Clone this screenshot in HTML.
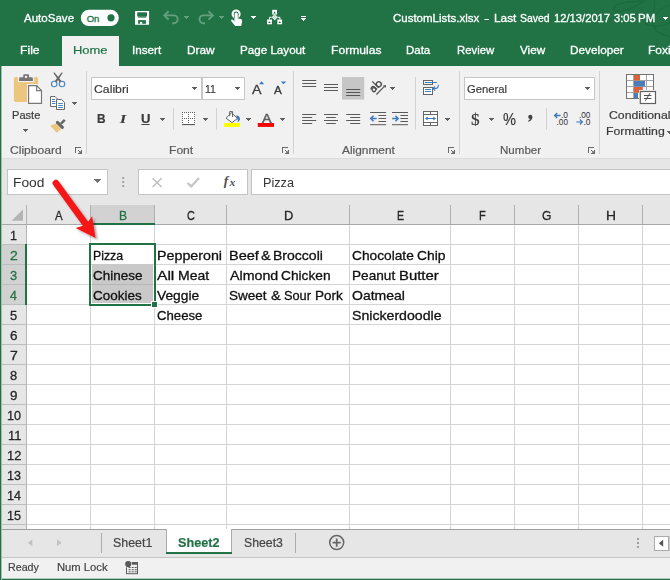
<!DOCTYPE html>
<html><head><meta charset="utf-8"><title>Excel</title>
<style>
html,body{margin:0;padding:0}
body{width:670px;height:580px;overflow:hidden;position:relative;background:#fff;font-family:"Liberation Sans",sans-serif}
.a{position:absolute}
.t{position:absolute;white-space:nowrap;line-height:1;transform-origin:0 0;display:block}
svg{position:absolute;left:0;top:0}
.k{-webkit-text-stroke:0.3px currentColor}
.k2{-webkit-text-stroke:0.5px currentColor}
.k3{-webkit-text-stroke:0.2px currentColor}
</style></head><body>
<!-- backgrounds -->
<div class="a" style="left:0;top:0;width:670px;height:66px;background:#217346"></div>
<div class="a" style="left:62px;top:36px;width:57px;height:30px;background:#f1f1f1"></div>
<div class="a" style="left:0;top:66px;width:670px;height:92px;background:#f1f1f1"></div>
<div class="a" style="left:0;top:158px;width:670px;height:47px;background:#e6e6e6"></div>
<div class="a" style="left:0;top:158px;width:670px;height:1px;background:#dcdcdc"></div>
<!-- name box & formula boxes -->
<div class="a" style="left:7px;top:169px;width:99px;height:24px;background:#fff;border:1px solid #c4c4c4"></div>
<div class="a" style="left:138px;top:169px;width:108px;height:24px;background:#fff;border:1px solid #c4c4c4"></div>
<div class="a" style="left:251px;top:169px;width:430px;height:24px;background:#fff;border:1px solid #c4c4c4"></div>
<!-- column header -->
<div class="a" style="left:0;top:205px;width:670px;height:19px;background:#e6e6e6"></div>
<div class="a" style="left:90px;top:205px;width:64px;height:19px;background:#d2d2d2"></div>
<div class="a" style="left:0;top:224px;width:670px;height:1px;background:#a8a8a8"></div>
<div class="a" style="left:90px;top:223px;width:65px;height:2px;background:#217346"></div>
<!-- row header -->
<div class="a" style="left:0;top:225px;width:26px;height:304px;background:#e6e6e6"></div>
<div class="a" style="left:0;top:245px;width:26px;height:60px;background:#d2d2d2"></div>
<div class="a" style="left:26px;top:205px;width:1px;height:324px;background:#b4b4b4"></div>
<div class="a" style="left:25px;top:245px;width:2px;height:60px;background:#217346"></div>
<!-- selected cells fill -->
<div class="a" style="left:92px;top:264px;width:61px;height:39px;background:#c9c9c9"></div>
<div class="a" style="left:92px;top:284px;width:61px;height:1px;background:#b8b8b8"></div>
<!-- tab bar + status bar -->
<div class="a" style="left:0;top:529px;width:670px;height:28px;background:#e6e6e6"></div>
<div class="a" style="left:0;top:529px;width:670px;height:1px;background:#9e9e9e"></div>
<div class="a" style="left:166px;top:529px;width:66px;height:23px;background:#fff;border-left:1px solid #ababab;border-right:1px solid #ababab;box-sizing:border-box"></div>
<div class="a" style="left:166px;top:552px;width:66px;height:2px;background:#217346"></div>
<div class="a" style="left:0;top:557px;width:670px;height:23px;background:#f1f1f1"></div>
<div class="a" style="left:0;top:557px;width:670px;height:1px;background:#c4c4c4"></div>
<div class="a" style="left:0;top:579px;width:670px;height:1px;background:#217346"></div>
<div class="a" style="left:0;top:578px;width:670px;height:1px;background:#b3cbbe"></div>
<!-- scroll button -->
<div class="a" style="left:654px;top:536px;width:15px;height:15px;background:#fff;border:1px solid #ababab;box-sizing:border-box"></div>
<div class="a" style="left:669px;top:536px;width:1px;height:15px;background:#c8c8c8"></div>
<!-- left window border -->
<div class="a" style="left:0;top:0;width:1px;height:580px;background:#217346"></div>
<div class="a" style="left:1px;top:66px;width:1px;height:514px;background:#9dbfab"></div>

<svg width="670" height="580" viewBox="0 0 670 580">
<rect x="90" y="225" width="1" height="304" fill="#d4d4d4"/>
<rect x="90" y="205" width="1" height="19" fill="#b0b0b0"/>
<rect x="154" y="225" width="1" height="304" fill="#d4d4d4"/>
<rect x="154" y="205" width="1" height="19" fill="#b0b0b0"/>
<rect x="226" y="225" width="1" height="304" fill="#d4d4d4"/>
<rect x="226" y="205" width="1" height="19" fill="#b0b0b0"/>
<rect x="349" y="225" width="1" height="304" fill="#d4d4d4"/>
<rect x="349" y="205" width="1" height="19" fill="#b0b0b0"/>
<rect x="450" y="225" width="1" height="304" fill="#d4d4d4"/>
<rect x="450" y="205" width="1" height="19" fill="#b0b0b0"/>
<rect x="514" y="225" width="1" height="304" fill="#d4d4d4"/>
<rect x="514" y="205" width="1" height="19" fill="#b0b0b0"/>
<rect x="578" y="225" width="1" height="304" fill="#d4d4d4"/>
<rect x="578" y="205" width="1" height="19" fill="#b0b0b0"/>
<rect x="642" y="225" width="1" height="304" fill="#d4d4d4"/>
<rect x="642" y="205" width="1" height="19" fill="#b0b0b0"/>
<rect x="27" y="244" width="643" height="1" fill="#d4d4d4"/>
<rect x="1" y="244" width="25" height="1" fill="#bdbdbd"/>
<rect x="27" y="264" width="643" height="1" fill="#d4d4d4"/>
<rect x="1" y="264" width="25" height="1" fill="#bdbdbd"/>
<rect x="27" y="284" width="643" height="1" fill="#d4d4d4"/>
<rect x="1" y="284" width="25" height="1" fill="#bdbdbd"/>
<rect x="27" y="304" width="643" height="1" fill="#d4d4d4"/>
<rect x="1" y="304" width="25" height="1" fill="#bdbdbd"/>
<rect x="27" y="324" width="643" height="1" fill="#d4d4d4"/>
<rect x="1" y="324" width="25" height="1" fill="#bdbdbd"/>
<rect x="27" y="344" width="643" height="1" fill="#d4d4d4"/>
<rect x="1" y="344" width="25" height="1" fill="#bdbdbd"/>
<rect x="27" y="364" width="643" height="1" fill="#d4d4d4"/>
<rect x="1" y="364" width="25" height="1" fill="#bdbdbd"/>
<rect x="27" y="384" width="643" height="1" fill="#d4d4d4"/>
<rect x="1" y="384" width="25" height="1" fill="#bdbdbd"/>
<rect x="27" y="404" width="643" height="1" fill="#d4d4d4"/>
<rect x="1" y="404" width="25" height="1" fill="#bdbdbd"/>
<rect x="27" y="424" width="643" height="1" fill="#d4d4d4"/>
<rect x="1" y="424" width="25" height="1" fill="#bdbdbd"/>
<rect x="27" y="444" width="643" height="1" fill="#d4d4d4"/>
<rect x="1" y="444" width="25" height="1" fill="#bdbdbd"/>
<rect x="27" y="464" width="643" height="1" fill="#d4d4d4"/>
<rect x="1" y="464" width="25" height="1" fill="#bdbdbd"/>
<rect x="27" y="484" width="643" height="1" fill="#d4d4d4"/>
<rect x="1" y="484" width="25" height="1" fill="#bdbdbd"/>
<rect x="27" y="504" width="643" height="1" fill="#d4d4d4"/>
<rect x="1" y="504" width="25" height="1" fill="#bdbdbd"/>
<rect x="27" y="524" width="643" height="1" fill="#d4d4d4"/>
<rect x="1" y="524" width="25" height="1" fill="#bdbdbd"/>
<rect x="92" y="264" width="61" height="39" fill="#c9c9c9"/><rect x="92" y="284" width="61" height="1" fill="#b6b6b6"/>
<rect x="25" y="244" width="2" height="61" fill="#217346"/><rect x="90" y="223" width="65" height="2" fill="#217346"/>
<path d="M90 244 H155 V305 H90 Z" fill="none" stroke="#217346" stroke-width="2"/>
<rect x="151" y="301" width="7" height="7" fill="#fff"/><rect x="152" y="302" width="5" height="5" fill="#217346"/>
<g fill="none" stroke="#1b683d" stroke-width="1.4" opacity="0.8"><path d="M613.4 9 C614.5 3.5 624 1.6 642 1.2"/><path d="M613.4 9 C617 14.5 633 9 644.6 0.4"/><path d="M654.4 0 C656.5 9 649 20 654 27.5 C657.5 32.5 664 35.5 670 37"/><path d="M670 5.6 C664 6.5 660 9.5 657.6 12.5 C654 17 650 22 645 24"/><path d="M645 23 C652 27.5 662 27 670 22.5"/></g>
<rect x="80.8" y="9.8" width="38" height="16.2" rx="8.1" fill="#fff"/>
<circle cx="111" cy="17.8" r="3.6" fill="#217346"/>
<rect x="135" y="10.9" width="14.1" height="13.9" rx="0.6" fill="#fff"/>
<rect x="137.2" y="12.3" width="9.8" height="4.1" fill="#217346"/><rect x="138.1" y="16.3" width="8" height="1.3" fill="#217346"/>
<rect x="138.1" y="20.1" width="7.8" height="3.7" fill="#217346"/><rect x="139.9" y="21.9" width="2.3" height="2" fill="#fff"/>
<g fill="none" stroke="#62a07f" stroke-width="1.9"><path d="M168.6 11.2 L164.3 15.4 L168.6 19.6"/><path d="M164.6 15.4 H173.8 A3.9 3.9 0 0 1 173.8 23.2 H172.2"/>
<path d="M208.5 11.2 L212.8 15.4 L208.5 19.6"/><path d="M212.5 15.4 H203.4 A3.9 3.9 0 0 0 203.4 23.2 H205"/></g>
<rect x="184" y="16" width="5" height="1" fill="#62a07f"/>
<rect x="185" y="17" width="3" height="1" fill="#62a07f"/>
<rect x="186" y="18" width="1" height="1" fill="#62a07f"/>
<rect x="219" y="16" width="5" height="1" fill="#62a07f"/>
<rect x="220" y="17" width="3" height="1" fill="#62a07f"/>
<rect x="221" y="18" width="1" height="1" fill="#62a07f"/>
<g><circle cx="236.1" cy="14" r="3.5" fill="none" stroke="#fff" stroke-width="2.1"/><rect x="234" y="12" width="4.4" height="12" rx="2.2" fill="#217346"/><rect x="234.6" y="12.5" width="3.2" height="10" rx="1.6" fill="#fff"/><path d="M234.6 18.6 V21.4 L232.4 19.6 Q231.2 19.4 231 20.8 L235.2 25.9 H241.2 L242.2 21.2 Q242.2 19 240.2 18.8 L237.8 18.4 Z" fill="#fff"/></g>
<rect x="251" y="16" width="5" height="1" fill="#fff"/>
<rect x="252" y="17" width="3" height="1" fill="#fff"/>
<rect x="253" y="18" width="1" height="1" fill="#fff"/>
<rect x="272.2" y="9.8" width="4.8" height="4.8" fill="#fff"/>
<path d="M273.30 13.40 l1.3 -1.8 l1.3 1.8 Z" fill="#217346"/>
<rect x="267.1" y="19.5" width="4.8" height="4.8" fill="#fff"/>
<path d="M268.20 23.10 l1.3 -1.8 l1.3 1.8 Z" fill="#217346"/>
<rect x="277.3" y="19.5" width="4.8" height="4.8" fill="#fff"/>
<path d="M278.40 23.10 l1.3 -1.8 l1.3 1.8 Z" fill="#217346"/>
<path d="M274.7 14 L278 17.3 L274.7 20.6 L271.4 17.3 Z" fill="#a9ccb8"/>
<g fill="#fff"><rect x="274.2" y="14.6" width="1" height="1"/><rect x="273.2" y="15.8" width="1" height="1"/><rect x="275.2" y="15.8" width="1" height="1"/><rect x="272.2" y="16.8" width="1" height="1"/><rect x="274.2" y="16.8" width="1" height="1"/><rect x="276.2" y="16.8" width="1" height="1"/><rect x="273.2" y="17.8" width="1" height="1"/><rect x="275.2" y="17.8" width="1" height="1"/><rect x="274.2" y="18.9" width="1" height="1"/></g>
<path d="M271.6 17.3 H269.5 V19.6 M277.8 17.3 H279.9 V19.6" fill="none" stroke="#fff" stroke-width="1"/>
<rect x="301" y="16" width="5" height="1" fill="#fff"/>
<rect x="301" y="18" width="5" height="1" fill="#fff"/>
<rect x="302" y="19" width="3" height="1" fill="#fff"/>
<rect x="303" y="20" width="1" height="1" fill="#fff"/>
<rect x="663" y="17" width="5" height="1" fill="#fff"/>
<rect x="664" y="18" width="3" height="1" fill="#fff"/>
<rect x="665" y="19" width="1" height="1" fill="#fff"/>
<rect x="86" y="71" width="1" height="83" fill="#d2d2d2"/>
<rect x="293" y="71" width="1" height="83" fill="#d2d2d2"/>
<rect x="459" y="71" width="1" height="83" fill="#d2d2d2"/>
<rect x="599" y="71" width="1" height="83" fill="#d2d2d2"/>
<rect x="173" y="108" width="1" height="22" fill="#d2d2d2"/>
<rect x="216" y="108" width="1" height="22" fill="#d2d2d2"/>
<rect x="415" y="77" width="1" height="53" fill="#d2d2d2"/>
<rect x="546" y="108" width="1" height="22" fill="#d2d2d2"/>
<rect x="13.9" y="77" width="24.2" height="25.1" rx="1.8" fill="#ecc57e"/>
<rect x="17.8" y="76" width="16.4" height="6.1" fill="#f1f1f1"/>
<path d="M19.1 80.9 V78.4 Q19.1 77.2 20.3 77.2 H23.2 V75.5 Q23.2 74.3 24.4 74.3 H27.9 Q29.1 74.3 29.1 75.5 V77.2 H31.7 Q32.9 77.2 32.9 78.4 V80.9 Z" fill="#757575"/>
<rect x="24.9" y="75.9" width="2.3" height="2" fill="#f1f1f1"/>
<path d="M28.6 85.6 H36.6 L41.5 90.6 V103.4 H28.6 Z" fill="#fff" stroke="#f1f1f1" stroke-width="3.2"/>
<path d="M28.6 85.6 H36.6 L41.5 90.6 V103.4 H28.6 Z" fill="#fff" stroke="#787878" stroke-width="1.2"/>
<path d="M36.6 85.6 V90.6 H41.5" fill="none" stroke="#787878" stroke-width="1.2"/>
<rect x="23" y="129" width="5" height="1" fill="#5f5f5f"/>
<rect x="24" y="130" width="3" height="1" fill="#5f5f5f"/>
<rect x="25" y="131" width="1" height="1" fill="#5f5f5f"/>
<g fill="none" stroke="#4a84c6" stroke-width="1.15"><circle cx="54.2" cy="84" r="2.75"/><circle cx="62" cy="84" r="2.75"/></g>
<g fill="#666"><path d="M53.3 72.8 L54.6 72.4 L61.6 81.2 L59.6 82.2 Z"/><path d="M62.9 72.8 L61.6 72.4 L54.6 81.2 L56.6 82.2 Z"/></g>
<g fill="#fff" stroke="#6a6a6a" stroke-width="1"><path d="M50.5 96.5 H55 L57.5 99 V106.5 H50.5 Z"/><path d="M56.5 99.5 H61.6 L64.5 102.4 V109.5 H56.5 Z"/></g>
<g stroke="#4a84c6" stroke-width="1" fill="none"><path d="M52 99.5 H55 M52 101.5 H55.5 M52 103.5 H55.5 M58.2 103.5 H62.8 M58.2 105.5 H62.8 M58.2 107.5 H62.8"/></g>
<rect x="72" y="102" width="5" height="1" fill="#5f5f5f"/>
<rect x="73" y="103" width="3" height="1" fill="#5f5f5f"/>
<rect x="74" y="104" width="1" height="1" fill="#5f5f5f"/>
<path d="M50.2 125.8 L56 123.6 L61.2 129 L56.8 132.8 Z" fill="#ecc57e"/>
<path d="M57.4 122.4 L62.4 127.4" stroke="#666" stroke-width="3" stroke-linecap="round" fill="none"/>
<path d="M61 123.6 L64.8 119.9" stroke="#666" stroke-width="2.6" fill="none"/>
<rect x="75" y="147" width="6" height="1" fill="#6a6a6a"/><rect x="75" y="147" width="1" height="6" fill="#6a6a6a"/>
<rect x="78" y="150" width="1" height="1" fill="#6a6a6a"/>
<rect x="79" y="151" width="1" height="1" fill="#6a6a6a"/>
<rect x="80" y="152" width="1" height="1" fill="#6a6a6a"/>
<rect x="81" y="150" width="1" height="1" fill="#6a6a6a"/>
<rect x="81" y="151" width="1" height="1" fill="#6a6a6a"/>
<rect x="81" y="152" width="1" height="1" fill="#6a6a6a"/>
<rect x="81" y="153" width="1" height="1" fill="#6a6a6a"/>
<rect x="78" y="153" width="1" height="1" fill="#6a6a6a"/>
<rect x="79" y="153" width="1" height="1" fill="#6a6a6a"/>
<rect x="80" y="153" width="1" height="1" fill="#6a6a6a"/>
<rect x="80" y="151" width="1" height="1" fill="#9a9a9a"/>
<rect x="79" y="152" width="1" height="1" fill="#9a9a9a"/>
<rect x="282" y="147" width="6" height="1" fill="#6a6a6a"/><rect x="282" y="147" width="1" height="6" fill="#6a6a6a"/>
<rect x="285" y="150" width="1" height="1" fill="#6a6a6a"/>
<rect x="286" y="151" width="1" height="1" fill="#6a6a6a"/>
<rect x="287" y="152" width="1" height="1" fill="#6a6a6a"/>
<rect x="288" y="150" width="1" height="1" fill="#6a6a6a"/>
<rect x="288" y="151" width="1" height="1" fill="#6a6a6a"/>
<rect x="288" y="152" width="1" height="1" fill="#6a6a6a"/>
<rect x="288" y="153" width="1" height="1" fill="#6a6a6a"/>
<rect x="285" y="153" width="1" height="1" fill="#6a6a6a"/>
<rect x="286" y="153" width="1" height="1" fill="#6a6a6a"/>
<rect x="287" y="153" width="1" height="1" fill="#6a6a6a"/>
<rect x="287" y="151" width="1" height="1" fill="#9a9a9a"/>
<rect x="286" y="152" width="1" height="1" fill="#9a9a9a"/>
<rect x="448" y="147" width="6" height="1" fill="#6a6a6a"/><rect x="448" y="147" width="1" height="6" fill="#6a6a6a"/>
<rect x="451" y="150" width="1" height="1" fill="#6a6a6a"/>
<rect x="452" y="151" width="1" height="1" fill="#6a6a6a"/>
<rect x="453" y="152" width="1" height="1" fill="#6a6a6a"/>
<rect x="454" y="150" width="1" height="1" fill="#6a6a6a"/>
<rect x="454" y="151" width="1" height="1" fill="#6a6a6a"/>
<rect x="454" y="152" width="1" height="1" fill="#6a6a6a"/>
<rect x="454" y="153" width="1" height="1" fill="#6a6a6a"/>
<rect x="451" y="153" width="1" height="1" fill="#6a6a6a"/>
<rect x="452" y="153" width="1" height="1" fill="#6a6a6a"/>
<rect x="453" y="153" width="1" height="1" fill="#6a6a6a"/>
<rect x="453" y="151" width="1" height="1" fill="#9a9a9a"/>
<rect x="452" y="152" width="1" height="1" fill="#9a9a9a"/>
<rect x="588" y="147" width="6" height="1" fill="#6a6a6a"/><rect x="588" y="147" width="1" height="6" fill="#6a6a6a"/>
<rect x="591" y="150" width="1" height="1" fill="#6a6a6a"/>
<rect x="592" y="151" width="1" height="1" fill="#6a6a6a"/>
<rect x="593" y="152" width="1" height="1" fill="#6a6a6a"/>
<rect x="594" y="150" width="1" height="1" fill="#6a6a6a"/>
<rect x="594" y="151" width="1" height="1" fill="#6a6a6a"/>
<rect x="594" y="152" width="1" height="1" fill="#6a6a6a"/>
<rect x="594" y="153" width="1" height="1" fill="#6a6a6a"/>
<rect x="591" y="153" width="1" height="1" fill="#6a6a6a"/>
<rect x="592" y="153" width="1" height="1" fill="#6a6a6a"/>
<rect x="593" y="153" width="1" height="1" fill="#6a6a6a"/>
<rect x="593" y="151" width="1" height="1" fill="#9a9a9a"/>
<rect x="592" y="152" width="1" height="1" fill="#9a9a9a"/>
<rect x="91.5" y="77.5" width="110.0" height="22.0" fill="#fff" stroke="#c6c6c6" stroke-width="1"/>
<rect x="202.5" y="77.5" width="42.0" height="22.0" fill="#fff" stroke="#c6c6c6" stroke-width="1"/>
<rect x="464.5" y="77.5" width="130.0" height="22.0" fill="#fff" stroke="#c6c6c6" stroke-width="1"/>
<rect x="192" y="87" width="5" height="1" fill="#5f5f5f"/>
<rect x="193" y="88" width="3" height="1" fill="#5f5f5f"/>
<rect x="194" y="89" width="1" height="1" fill="#5f5f5f"/>
<rect x="235" y="87" width="5" height="1" fill="#5f5f5f"/>
<rect x="236" y="88" width="3" height="1" fill="#5f5f5f"/>
<rect x="237" y="89" width="1" height="1" fill="#5f5f5f"/>
<rect x="585" y="87" width="5" height="1" fill="#5f5f5f"/>
<rect x="586" y="88" width="3" height="1" fill="#5f5f5f"/>
<rect x="587" y="89" width="1" height="1" fill="#5f5f5f"/>
<path d="M259 84.3 L261.6 81.3 L264.2 84.3 Z" fill="#3d7ac4"/>
<path d="M280.8 81.4 H286.2 L283.5 84.2 Z" fill="#3d7ac4"/>
<rect x="141.4" y="124" width="8.2" height="1" fill="#444"/>
<rect x="160" y="118" width="5" height="1" fill="#5f5f5f"/>
<rect x="161" y="119" width="3" height="1" fill="#5f5f5f"/>
<rect x="162" y="120" width="1" height="1" fill="#5f5f5f"/>
<rect x="182" y="112" width="13" height="12" fill="#fff"/>
<rect x="182" y="112" width="1" height="1" fill="#606060"/>
<rect x="184" y="112" width="1" height="1" fill="#606060"/>
<rect x="186" y="112" width="1" height="1" fill="#606060"/>
<rect x="188" y="112" width="1" height="1" fill="#606060"/>
<rect x="190" y="112" width="1" height="1" fill="#606060"/>
<rect x="192" y="112" width="1" height="1" fill="#606060"/>
<rect x="194" y="112" width="1" height="1" fill="#606060"/>
<rect x="182" y="114" width="1" height="1" fill="#606060"/>
<rect x="188" y="114" width="1" height="1" fill="#606060"/>
<rect x="194" y="114" width="1" height="1" fill="#606060"/>
<rect x="182" y="116" width="1" height="1" fill="#606060"/>
<rect x="188" y="116" width="1" height="1" fill="#606060"/>
<rect x="194" y="116" width="1" height="1" fill="#606060"/>
<rect x="182" y="118" width="1" height="1" fill="#606060"/>
<rect x="184" y="118" width="1" height="1" fill="#606060"/>
<rect x="186" y="118" width="1" height="1" fill="#606060"/>
<rect x="188" y="118" width="1" height="1" fill="#606060"/>
<rect x="190" y="118" width="1" height="1" fill="#606060"/>
<rect x="192" y="118" width="1" height="1" fill="#606060"/>
<rect x="194" y="118" width="1" height="1" fill="#606060"/>
<rect x="182" y="120" width="1" height="1" fill="#606060"/>
<rect x="188" y="120" width="1" height="1" fill="#606060"/>
<rect x="194" y="120" width="1" height="1" fill="#606060"/>
<rect x="182" y="122" width="1" height="1" fill="#606060"/>
<rect x="188" y="122" width="1" height="1" fill="#606060"/>
<rect x="194" y="122" width="1" height="1" fill="#606060"/>
<rect x="182" y="124" width="13" height="1.1" fill="#5a5a5a"/>
<rect x="203" y="118" width="5" height="1" fill="#5f5f5f"/>
<rect x="204" y="119" width="3" height="1" fill="#5f5f5f"/>
<rect x="205" y="120" width="1" height="1" fill="#5f5f5f"/>
<rect x="224" y="123" width="16.1" height="3.9" fill="#ffff00"/>
<path d="M236.7 115.2 Q240.6 116.6 239.9 119.4 Q239.4 121.4 237.6 122.3 Q238.4 119.6 236.2 117.2 Z" fill="#3d7ac4"/>
<path d="M231.5 112.8 L237.6 118.4 L232 122.6 L226.1 118.2 Z" fill="#fff" stroke="#606060" stroke-width="1"/>
<path d="M229.7 116.2 V111.6 H232.6 V117" fill="none" stroke="#606060" stroke-width="1"/>
<rect x="246" y="118" width="5" height="1" fill="#5f5f5f"/>
<rect x="247" y="119" width="3" height="1" fill="#5f5f5f"/>
<rect x="248" y="120" width="1" height="1" fill="#5f5f5f"/>
<rect x="257.8" y="123" width="16.2" height="3.9" fill="#ff0000"/>
<rect x="280" y="118" width="5" height="1" fill="#5f5f5f"/>
<rect x="281" y="119" width="3" height="1" fill="#5f5f5f"/>
<rect x="282" y="120" width="1" height="1" fill="#5f5f5f"/>
<rect x="302.2" y="80.0" width="14.0" height="1" fill="#5a5a5a"/>
<rect x="302.2" y="83.0" width="14.0" height="1" fill="#5a5a5a"/>
<rect x="302.2" y="86.0" width="14.0" height="1" fill="#5a5a5a"/>
<rect x="324.0" y="84.0" width="14.0" height="1" fill="#5a5a5a"/>
<rect x="324.0" y="87.0" width="14.0" height="1" fill="#5a5a5a"/>
<rect x="324.0" y="90.0" width="14.0" height="1" fill="#5a5a5a"/>
<rect x="342" y="77" width="22.2" height="22.6" fill="#c6c6c6"/>
<rect x="346.2" y="89.0" width="14.0" height="1" fill="#555"/>
<rect x="346.2" y="92.0" width="14.0" height="1" fill="#555"/>
<rect x="346.2" y="95.0" width="14.0" height="1" fill="#555"/>
<rect x="302.2" y="114.0" width="14.0" height="1" fill="#5a5a5a"/>
<rect x="302.2" y="117.0" width="10.0" height="1" fill="#5a5a5a"/>
<rect x="302.2" y="120.0" width="14.0" height="1" fill="#5a5a5a"/>
<rect x="302.2" y="123.0" width="10.0" height="1" fill="#5a5a5a"/>
<rect x="324.0" y="114.0" width="14.0" height="1" fill="#5a5a5a"/>
<rect x="326.2" y="117.0" width="9.6" height="1" fill="#5a5a5a"/>
<rect x="324.0" y="120.0" width="14.0" height="1" fill="#5a5a5a"/>
<rect x="326.2" y="123.0" width="9.6" height="1" fill="#5a5a5a"/>
<rect x="346.2" y="114.0" width="14.0" height="1" fill="#5a5a5a"/>
<rect x="350.2" y="117.0" width="10.0" height="1" fill="#5a5a5a"/>
<rect x="346.2" y="120.0" width="14.0" height="1" fill="#5a5a5a"/>
<rect x="350.2" y="123.0" width="10.0" height="1" fill="#5a5a5a"/>
<g transform="translate(373.7,92.9) rotate(-45)" fill="none" stroke="#4c4c4c" stroke-width="1.35"><circle cx="2.5" cy="-2.1" r="1.9"/><path d="M4.7 0 V-3.4 Q4.4 -5.6 2.4 -5.4 Q1.2 -5.3 0.5 -4.4"/><path d="M7.1 0 V-9.2"/><circle cx="9.7" cy="-2.5" r="2.5"/></g>
<path d="M376.4 94.5 L384.6 86.2" fill="none" stroke="#555" stroke-width="1.2"/><path d="M386 85 L382.9 85.4 L385.6 88 Z" fill="#555"/>
<rect x="390" y="87" width="5" height="1" fill="#5f5f5f"/>
<rect x="391" y="88" width="3" height="1" fill="#5f5f5f"/>
<rect x="392" y="89" width="1" height="1" fill="#5f5f5f"/>
<rect x="370.1" y="112.0" width="16" height="1" fill="#5a5a5a"/>
<rect x="370.1" y="124.2" width="16" height="1" fill="#5a5a5a"/>
<rect x="378.5" y="115.0" width="7.6" height="1" fill="#5a5a5a"/>
<rect x="378.5" y="118.0" width="7.6" height="1" fill="#5a5a5a"/>
<rect x="378.5" y="121.0" width="7.6" height="1" fill="#5a5a5a"/>
<path d="M376.7 118.5 H370.9 M373.5 115.7 L370.7 118.5 L373.5 121.3" fill="none" stroke="#3d7ac4" stroke-width="1.5"/>
<rect x="392.0" y="112.0" width="16" height="1" fill="#5a5a5a"/>
<rect x="392.0" y="124.2" width="16" height="1" fill="#5a5a5a"/>
<rect x="400.4" y="115.0" width="7.6" height="1" fill="#5a5a5a"/>
<rect x="400.4" y="118.0" width="7.6" height="1" fill="#5a5a5a"/>
<rect x="400.4" y="121.0" width="7.6" height="1" fill="#5a5a5a"/>
<path d="M392.2 118.5 H398.0 M395.4 115.7 L398.2 118.5 L395.4 121.3" fill="none" stroke="#3d7ac4" stroke-width="1.5"/>
<g fill="#fff" stroke="#666" stroke-width="1"><rect x="423.5" y="80.5" width="9" height="4"/><rect x="423.5" y="87.5" width="9" height="7"/></g>
<rect x="425" y="82" width="12" height="1" fill="#3d7ac4"/><rect x="425" y="89" width="6" height="1" fill="#3d7ac4"/><rect x="425" y="91" width="6" height="1" fill="#3d7ac4"/>
<g fill="none" stroke="#3d7ac4" stroke-width="1.1"><path d="M438.3 84.8 Q438.6 88.6 435.2 88.6 H433"/><path d="M435.2 86.5 L432.8 88.6 L435.2 90.7"/></g>
<g fill="#fff" stroke="#666" stroke-width="1"><rect x="423.5" y="111.5" width="14" height="14"/><path d="M423.5 114.5 H437.5 M423.5 122.5 H437.5 M430.5 111.5 V114.5 M430.5 122.5 V125.5"/></g>
<rect x="426" y="118" width="9.4" height="1" fill="#3d7ac4"/><path d="M424.9 118.5 L427.7 116.5 V120.5 Z M436.1 118.5 L433.3 116.5 V120.5 Z" fill="#3d7ac4"/>
<rect x="445" y="118" width="5" height="1" fill="#5f5f5f"/>
<rect x="446" y="119" width="3" height="1" fill="#5f5f5f"/>
<rect x="447" y="120" width="1" height="1" fill="#5f5f5f"/>
<rect x="489" y="118" width="5" height="1" fill="#5f5f5f"/>
<rect x="490" y="119" width="3" height="1" fill="#5f5f5f"/>
<rect x="491" y="120" width="1" height="1" fill="#5f5f5f"/>
<text x="561.0" y="118.0" font-family="Liberation Sans, sans-serif" font-size="8.6" fill="#333" textLength="7.0" lengthAdjust="spacingAndGlyphs">.0</text>
<text x="556.6" y="125.0" font-family="Liberation Sans, sans-serif" font-size="8.6" fill="#333" textLength="11.4" lengthAdjust="spacingAndGlyphs">.00</text>
<path d="M560.6 115.5 H554.6 M557.2 113 L554.6 115.5 L557.2 118" fill="none" stroke="#3d7ac4" stroke-width="1.4"/>
<text x="579.0" y="118.0" font-family="Liberation Sans, sans-serif" font-size="8.6" fill="#333" textLength="11.4" lengthAdjust="spacingAndGlyphs">.00</text>
<text x="583.4" y="125.0" font-family="Liberation Sans, sans-serif" font-size="8.6" fill="#333" textLength="7.0" lengthAdjust="spacingAndGlyphs">.0</text>
<path d="M576.2 122 H582.4 M579.8 119.5 L582.4 122 L579.8 124.5" fill="none" stroke="#3d7ac4" stroke-width="1.2"/>
<rect x="626" y="74" width="28" height="25" fill="#fff"/>
<g fill="none" stroke="#a4a4a4" stroke-width="1"><path d="M633.5 75 V98 M646.5 75 V98 M627 80.5 H653 M627 86.5 H653 M627 92.5 H653"/></g>
<rect x="626.5" y="74.5" width="27" height="24" fill="none" stroke="#727272" stroke-width="1"/>
<rect x="634" y="75" width="6" height="5.5" fill="#d9603b"/><rect x="634" y="81" width="11" height="5.5" fill="#4a7ebb"/><rect x="634" y="87" width="8.8" height="5.5" fill="#d9603b"/><rect x="634" y="93" width="4" height="5" fill="#4a7ebb"/>
<rect x="639" y="90" width="18" height="15" fill="#f1f1f1"/>
<rect x="640.3" y="91.5" width="15.2" height="12" fill="#fff" stroke="#606060" stroke-width="1.2"/>
<path d="M644 95.5 H651.4 M644 98.5 H651.4 M650 93 L645.3 100.8" fill="none" stroke="#3c3c3c" stroke-width="0.9"/>
<circle cx="530.3" cy="116.9" r="2.1" fill="#444"/><path d="M532.4 117 Q532.4 120.4 528.5 121.7 L528 120.9 Q530 119.8 530.2 118.2 Z" fill="#444"/>
<rect x="667" y="131" width="5" height="1" fill="#5f5f5f"/>
<rect x="668" y="132" width="3" height="1" fill="#5f5f5f"/>
<rect x="669" y="133" width="1" height="1" fill="#5f5f5f"/>
<rect x="94" y="179" width="7" height="1" fill="#707070"/>
<rect x="95" y="180" width="5" height="1" fill="#707070"/>
<rect x="96" y="181" width="3" height="1" fill="#707070"/>
<rect x="97" y="182" width="1" height="1" fill="#707070"/>
<rect x="122.2" y="177.0" width="2" height="2" fill="#a4a4a4"/>
<rect x="122.2" y="181.0" width="2" height="2" fill="#a4a4a4"/>
<rect x="122.2" y="185.0" width="2" height="2" fill="#a4a4a4"/>
<path d="M152.6 178.2 L161.6 187 M161.6 178.2 L152.6 187" stroke="#c0c0c0" stroke-width="1.6" fill="none"/>
<path d="M187.6 183 L191.2 186.4 L199 178" stroke="#c4c4c4" stroke-width="2.2" fill="none"/>
<text x="223.8" y="185.4" font-family="Liberation Serif, serif" font-style="italic" font-weight="bold" font-size="13.5" fill="#505050">f</text>
<text x="229.4" y="185.9" font-family="Liberation Serif, serif" font-style="italic" font-weight="bold" font-size="9.5" fill="#505050" textLength="5.8" lengthAdjust="spacingAndGlyphs">x</text>
<path d="M11.6 220.8 L23 209.6 V220.8 Z" fill="#b4b4b4"/>
<path d="M32.4 539.2 V546.2 L27.8 542.7 Z" fill="#c2c2c2"/>
<path d="M57 539.2 V546.2 L61.6 542.7 Z" fill="#c2c2c2"/>
<rect x="101" y="533" width="1" height="20" fill="#ababab"/>
<rect x="295" y="533" width="1" height="20" fill="#ababab"/>
<circle cx="336.7" cy="542.6" r="7" fill="none" stroke="#666" stroke-width="1.5"/>
<path d="M332.6 542.6 H340.8 M336.7 538.5 V546.7" stroke="#666" stroke-width="1.8" fill="none"/>
<rect x="637" y="538.0" width="2" height="2" fill="#a0a0a0"/>
<rect x="637" y="542.0" width="2" height="2" fill="#a0a0a0"/>
<rect x="637" y="546.0" width="2" height="2" fill="#a0a0a0"/>
<path d="M663.2 539.8 V546.8 L658.8 543.3 Z" fill="#555"/>
<rect x="126.5" y="562.7" width="11" height="11" fill="none" stroke="#5a5a5a" stroke-width="1"/>
<rect x="131" y="562.2" width="7" height="2.5" fill="#5a5a5a"/>
<circle cx="128.2" cy="564.1" r="3.8" fill="#f1f1f1"/><circle cx="128.2" cy="564.1" r="3.1" fill="#5a5a5a"/>
<rect x="128.6" y="567.0" width="2" height="1" fill="#5a5a5a"/>
<rect x="131.7" y="567.0" width="2" height="1" fill="#5a5a5a"/>
<rect x="134.7" y="567.0" width="2" height="1" fill="#5a5a5a"/>
<rect x="128.6" y="569.2" width="2" height="1" fill="#5a5a5a"/>
<rect x="131.7" y="569.2" width="2" height="1" fill="#5a5a5a"/>
<rect x="134.7" y="569.2" width="2" height="1" fill="#5a5a5a"/>
<rect x="128.6" y="571.3" width="2" height="1" fill="#5a5a5a"/>
<rect x="131.7" y="571.3" width="2" height="1" fill="#5a5a5a"/>
<rect x="134.7" y="571.3" width="2" height="1" fill="#5a5a5a"/>
</svg>
<span class="t k" style="left:24.30px;top:12px;line-height:12px;font-size:11.5px;color:#fff;transform:scaleX(1.0040)">AutoSave</span>
<span class="t k" style="left:86.70px;top:13px;line-height:11px;font-size:9.5px;color:#217346;transform:scaleX(1.0000)">On</span>
<span class="t k" style="left:393.00px;top:12px;line-height:12px;font-size:11.5px;color:#fff;transform:scaleX(0.9988)">CustomLists.xlsx</span>
<span class="t k" style="left:483.81px;top:12px;line-height:12px;font-size:11.5px;color:#fff;transform:scaleX(1.3818)">-</span>
<span class="t k" style="left:494.47px;top:12px;line-height:12px;font-size:11.5px;color:#fff;transform:scaleX(1.0313)">Last</span>
<span class="t k" style="left:519.75px;top:12px;line-height:12px;font-size:11.5px;color:#fff;transform:scaleX(0.9088)">Saved</span>
<span class="t k" style="left:554.07px;top:12px;line-height:12px;font-size:11.5px;color:#fff;transform:scaleX(0.9742)">12/13/2017</span>
<span class="t k" style="left:613.81px;top:12px;line-height:12px;font-size:11.5px;color:#fff;transform:scaleX(0.9721)">3:05</span>
<span class="t k" style="left:638.40px;top:12px;line-height:12px;font-size:11.5px;color:#fff;transform:scaleX(0.9967)">PM</span>
<span class="t k" style="left:20.24px;top:44px;line-height:12px;font-size:11.5px;color:#fff;transform:scaleX(1.0588)">File</span>
<span class="t k3" style="left:73.28px;top:44px;line-height:12px;font-size:11.5px;color:#217346;transform:scaleX(1.1248)">Home</span>
<span class="t k" style="left:132.38px;top:44px;line-height:12px;font-size:11.5px;color:#fff;transform:scaleX(1.0162)">Insert</span>
<span class="t k" style="left:187.47px;top:44px;line-height:12px;font-size:11.5px;color:#fff;transform:scaleX(1.0291)">Draw</span>
<span class="t k" style="left:240.39px;top:44px;line-height:12px;font-size:11.5px;color:#fff;transform:scaleX(1.0110)">Page Layout</span>
<span class="t k" style="left:330.95px;top:44px;line-height:12px;font-size:11.5px;color:#fff;transform:scaleX(1.0538)">Formulas</span>
<span class="t k" style="left:406.40px;top:44px;line-height:12px;font-size:11.5px;color:#fff;transform:scaleX(0.9978)">Data</span>
<span class="t k" style="left:456.51px;top:44px;line-height:12px;font-size:11.5px;color:#fff;transform:scaleX(0.9878)">Review</span>
<span class="t k" style="left:519.74px;top:44px;line-height:12px;font-size:11.5px;color:#fff;transform:scaleX(1.0204)">View</span>
<span class="t k" style="left:570.37px;top:44px;line-height:12px;font-size:11.5px;color:#fff;transform:scaleX(1.0263)">Developer</span>
<span class="t k" style="left:647.96px;top:44px;line-height:12px;font-size:11.5px;color:#fff;transform:scaleX(1.0417)">Foxit</span>
<span class="t k3" style="left:12.04px;top:109px;line-height:12px;font-size:11.5px;color:#3b3b3b;transform:scaleX(0.9643)">Paste</span>
<span class="t k3" style="left:9.97px;top:144px;line-height:12px;font-size:11.5px;color:#5a5a5a;transform:scaleX(1.0521)">Clipboard</span>
<span class="t k3" style="left:93.97px;top:83px;line-height:12px;font-size:11.5px;color:#3b3b3b;transform:scaleX(1.0656)">Calibri</span>
<span class="t k3" style="left:205.12px;top:83px;line-height:12px;font-size:11.5px;color:#3b3b3b;transform:scaleX(0.9116)">11</span>
<span class="t k" style="left:251.50px;top:82px;line-height:15px;font-size:13px;color:#3b3b3b;transform:scaleX(1.0941)">A</span>
<span class="t k" style="left:273.80px;top:84px;line-height:12px;font-size:10.5px;color:#3b3b3b;transform:scaleX(1.1143)">A</span>
<span class="t k3" style="left:97.06px;top:112px;line-height:14px;font-size:12px;color:#3b3b3b;transform:scaleX(0.9867);font-weight:bold">B</span>
<span class="t k3" style="left:120.40px;top:111px;line-height:15px;font-size:13px;color:#3b3b3b;transform:scaleX(1.2000);font-weight:bold;font-style:italic;font-family:'Liberation Serif',serif">I</span>
<span class="t k3" style="left:140.78px;top:112px;line-height:14px;font-size:12px;color:#3b3b3b;transform:scaleX(1.0897);font-weight:bold">U</span>
<span class="t k2" style="left:261.80px;top:111px;line-height:15px;font-size:13px;color:#5c5c5c;transform:scaleX(1.1059)">A</span>
<span class="t k3" style="left:169.45px;top:144px;line-height:12px;font-size:11.5px;color:#5a5a5a;transform:scaleX(1.0500)">Font</span>
<span class="t k3" style="left:342.30px;top:144px;line-height:12px;font-size:11.5px;color:#5a5a5a;transform:scaleX(1.0333)">Alignment</span>
<span class="t k3" style="left:467.11px;top:83px;line-height:12px;font-size:11.5px;color:#3b3b3b;transform:scaleX(0.9786)">General</span>
<span class="t k3" style="left:471.16px;top:109px;line-height:20px;font-size:17.5px;color:#3b3b3b;transform:scaleX(0.9867);font-family:'Liberation Serif',serif">$</span>
<span class="t k3" style="left:503.14px;top:111px;line-height:17px;font-size:16px;color:#3b3b3b;transform:scaleX(0.9132)">%</span>
<span class="t k3" style="left:500.49px;top:144px;line-height:12px;font-size:11.5px;color:#5a5a5a;transform:scaleX(1.0063)">Number</span>
<span class="t k3" style="left:609.07px;top:109px;line-height:12px;font-size:11.5px;color:#3b3b3b;transform:scaleX(1.0684)">Conditional</span>
<span class="t k3" style="left:605.73px;top:125px;line-height:12px;font-size:11.5px;color:#3b3b3b;transform:scaleX(1.0685)">Formatting</span>
<span class="t" style="left:12.74px;top:175px;line-height:15px;font-size:13px;color:#333;transform:scaleX(1.0595)">Food</span>
<span class="t" style="left:263.02px;top:175px;line-height:15px;font-size:13px;color:#333;transform:scaleX(0.9756)">Pizza</span>
<span class="t k" style="left:55.15px;top:208px;line-height:15px;font-size:13px;color:#262626;transform:scaleX(0.8824)">A</span>
<span class="t k" style="left:118.72px;top:208px;line-height:15px;font-size:13px;color:#217346;transform:scaleX(0.9286)">B</span>
<span class="t k" style="left:186.92px;top:208px;line-height:15px;font-size:13px;color:#262626;transform:scaleX(0.8375)">C</span>
<span class="t k" style="left:283.56px;top:208px;line-height:15px;font-size:13px;color:#262626;transform:scaleX(0.9935)">D</span>
<span class="t k" style="left:396.74px;top:208px;line-height:15px;font-size:13px;color:#262626;transform:scaleX(0.8143)">E</span>
<span class="t k" style="left:479.30px;top:208px;line-height:15px;font-size:13px;color:#262626;transform:scaleX(0.8462)">F</span>
<span class="t k" style="left:542.25px;top:208px;line-height:15px;font-size:13px;color:#262626;transform:scaleX(0.9294)">G</span>
<span class="t k" style="left:605.99px;top:208px;line-height:15px;font-size:13px;color:#262626;transform:scaleX(1.0621)">H</span>
<span class="t k" style="left:10.04px;top:228px;line-height:15px;font-size:13px;color:#262626;transform:scaleX(0.9636)">1</span>
<span class="t k" style="left:9.89px;top:248px;line-height:15px;font-size:13px;color:#217346;transform:scaleX(1.0783)">2</span>
<span class="t k" style="left:10.20px;top:268px;line-height:15px;font-size:13px;color:#217346;transform:scaleX(0.9920)">3</span>
<span class="t k" style="left:10.46px;top:288px;line-height:15px;font-size:13px;color:#217346;transform:scaleX(0.9538)">4</span>
<span class="t k" style="left:10.20px;top:308px;line-height:15px;font-size:13px;color:#262626;transform:scaleX(0.9920)">5</span>
<span class="t k" style="left:9.92px;top:328px;line-height:15px;font-size:13px;color:#262626;transform:scaleX(1.0333)">6</span>
<span class="t k" style="left:9.89px;top:348px;line-height:15px;font-size:13px;color:#262626;transform:scaleX(1.0783)">7</span>
<span class="t k" style="left:10.20px;top:368px;line-height:15px;font-size:13px;color:#262626;transform:scaleX(0.9920)">8</span>
<span class="t k" style="left:10.18px;top:388px;line-height:15px;font-size:13px;color:#262626;transform:scaleX(1.0333)">9</span>
<span class="t k" style="left:6.93px;top:408px;line-height:15px;font-size:13px;color:#262626;transform:scaleX(0.9692)">10</span>
<span class="t k" style="left:7.51px;top:428px;line-height:15px;font-size:13px;color:#262626;transform:scaleX(0.9872)">11</span>
<span class="t k" style="left:6.91px;top:448px;line-height:15px;font-size:13px;color:#262626;transform:scaleX(0.9882)">12</span>
<span class="t k" style="left:6.93px;top:468px;line-height:15px;font-size:13px;color:#262626;transform:scaleX(0.9692)">13</span>
<span class="t k" style="left:6.93px;top:488px;line-height:15px;font-size:13px;color:#262626;transform:scaleX(0.9692)">14</span>
<span class="t k" style="left:6.93px;top:508px;line-height:15px;font-size:13px;color:#262626;transform:scaleX(0.9692)">15</span>
<span class="t k" style="left:92.95px;top:248px;line-height:15px;font-size:13px;color:#111;transform:scaleX(0.9463)">Pizza</span>
<span class="t k" style="left:93.12px;top:268px;line-height:15px;font-size:13px;color:#111;transform:scaleX(1.0357)">Chinese</span>
<span class="t k" style="left:93.12px;top:288px;line-height:15px;font-size:13px;color:#111;transform:scaleX(1.0361)">Cookies</span>
<span class="t k" style="left:156.60px;top:248px;line-height:15px;font-size:13px;color:#111;transform:scaleX(1.0974)">Pepperoni</span>
<span class="t k" style="left:157.30px;top:268px;line-height:15px;font-size:13px;color:#111;transform:scaleX(1.2000)">All</span>
<span class="t k" style="left:177.52px;top:268px;line-height:15px;font-size:13px;color:#111;transform:scaleX(1.0775)">Meat</span>
<span class="t k" style="left:157.24px;top:288px;line-height:15px;font-size:13px;color:#111;transform:scaleX(1.0590)">Veggie</span>
<span class="t k" style="left:156.94px;top:308px;line-height:15px;font-size:13px;color:#111;transform:scaleX(1.0138)">Cheese</span>
<span class="t k" style="left:228.68px;top:248px;line-height:15px;font-size:13px;color:#111;transform:scaleX(1.1184)">Beef</span>
<span class="t k" style="left:261.35px;top:248px;line-height:15px;font-size:13px;color:#111;transform:scaleX(1.1000)">&amp;</span>
<span class="t k" style="left:273.42px;top:248px;line-height:15px;font-size:13px;color:#111;transform:scaleX(1.0787)">Broccoli</span>
<span class="t k" style="left:229.60px;top:268px;line-height:15px;font-size:13px;color:#111;transform:scaleX(1.0936)">Almond</span>
<span class="t k" style="left:280.81px;top:268px;line-height:15px;font-size:13px;color:#111;transform:scaleX(1.0549)">Chicken</span>
<span class="t k" style="left:229.02px;top:288px;line-height:15px;font-size:13px;color:#111;transform:scaleX(1.0383)">Sweet</span>
<span class="t k" style="left:271.14px;top:288px;line-height:15px;font-size:13px;color:#111;transform:scaleX(1.1125)">&amp;</span>
<span class="t k" style="left:284.06px;top:288px;line-height:15px;font-size:13px;color:#111;transform:scaleX(0.9811)">Sour</span>
<span class="t k" style="left:315.06px;top:288px;line-height:15px;font-size:13px;color:#111;transform:scaleX(1.0408)">Pork</span>
<span class="t k" style="left:352.01px;top:248px;line-height:15px;font-size:13px;color:#111;transform:scaleX(1.0550)">Chocolate</span>
<span class="t k" style="left:416.70px;top:248px;line-height:15px;font-size:13px;color:#111;transform:scaleX(1.0627)">Chip</span>
<span class="t k" style="left:352.05px;top:268px;line-height:15px;font-size:13px;color:#111;transform:scaleX(1.0475)">Peanut</span>
<span class="t k" style="left:398.55px;top:268px;line-height:15px;font-size:13px;color:#111;transform:scaleX(1.1463)">Butter</span>
<span class="t k" style="left:352.26px;top:288px;line-height:15px;font-size:13px;color:#111;transform:scaleX(1.0785)">Oatmeal</span>
<span class="t k" style="left:351.99px;top:308px;line-height:15px;font-size:13px;color:#111;transform:scaleX(1.0864)">Snickerdoodle</span>
<span class="t k3" style="left:113.08px;top:535px;line-height:15px;font-size:13px;color:#444;transform:scaleX(0.9560)">Sheet1</span>
<span class="t k3" style="left:177.91px;top:535px;line-height:15px;font-size:13px;color:#217346;transform:scaleX(0.9735);font-weight:bold">Sheet2</span>
<span class="t k3" style="left:243.69px;top:535px;line-height:15px;font-size:13px;color:#444;transform:scaleX(0.9450)">Sheet3</span>
<span class="t k3" style="left:7.87px;top:561px;line-height:12px;font-size:11.5px;color:#444;transform:scaleX(0.9302)">Ready</span>
<span class="t k3" style="left:57.32px;top:561px;line-height:12px;font-size:11.5px;color:#444;transform:scaleX(0.9773)">Num Lock</span>
<svg width="670" height="580" viewBox="0 0 670 580" style="pointer-events:none">
<defs><filter id="sh" x="-20%" y="-20%" width="150%" height="150%"><feGaussianBlur in="SourceAlpha" stdDeviation="1.2"/><feOffset dx="1.5" dy="1.5"/><feComponentTransfer><feFuncA type="linear" slope="0.35"/></feComponentTransfer><feMerge><feMergeNode/><feMergeNode in="SourceGraphic"/></feMerge></filter></defs>
<g filter="url(#sh)" fill="#f51417" stroke="none">
<path d="M55.9 183.1 L86 224.5" stroke="#f51417" stroke-width="6.6" stroke-linecap="round" fill="none"/>
<path d="M95.6 238 L92.1 216.2 L87.6 222.4 L83.0 225.8 L75.6 227.9 Z"/>
</g>

</svg>
</body></html>
